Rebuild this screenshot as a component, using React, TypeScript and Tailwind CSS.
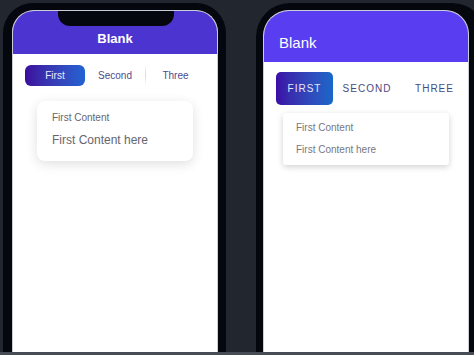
const font = { fontFamily: '"Liberation Sans", Arial, sans-serif' }

function LeftPhone() {
  return (
    <div className="w-[223px] h-[360px] shrink-0 rounded-t-[30px] bg-[#05070f] pt-[7px] pl-[9px] pr-[8px]">
      <div className="relative h-full bg-white rounded-t-[22px] overflow-hidden border border-b-0 border-[#c9cdd6]">
        <div className="absolute left-[45px] top-0 w-[116px] h-[15px] bg-[#05070f] rounded-b-[12px]" />
        <div className="h-[43px] bg-[#4b34cf] flex items-end justify-center pb-[9px]">
          <span className="text-white text-[13px] font-bold leading-none">Blank</span>
        </div>
        <div className="mt-[10px] flex justify-center">
          <div className="flex items-center">
            <div className="w-[60px] h-[21px] rounded-[6px] bg-gradient-to-r from-[#3b0c9e] to-[#1f63d2] flex items-center justify-center text-[#ece9ff] text-[10px]">
              First
            </div>
            <div className="w-[60px] h-[21px] flex items-center justify-center text-[#4d4b8e] text-[10px]">Second</div>
            <div className="w-px h-[22px] bg-gradient-to-b from-transparent via-[#d6d7e0] to-transparent" />
            <div className="w-[59px] h-[21px] flex items-center justify-center text-[#4d4b8e] text-[10px]">Three</div>
          </div>
        </div>
        <div className="mx-auto mt-[15px] w-[156px] h-[60px] rounded-[8px] bg-white shadow-[0_3px_12px_rgba(0,0,0,0.13)] pl-[15px] pt-[12px]">
          <div className="text-[10px] text-[#66666e] leading-none">First Content</div>
          <div className="mt-[11px] text-[12px] text-[#66666e] leading-none">First Content here</div>
        </div>
      </div>
    </div>
  )
}

function RightPhone() {
  return (
    <div className="w-[230px] h-[360px] shrink-0 rounded-t-[34px] bg-[#05070f] pt-[7px] pl-[7px] pr-[5px]">
      <div className="h-full w-[206px] bg-white rounded-tl-[26px] rounded-tr-[24px] overflow-hidden border border-b-0 border-[#c9cdd6]">
        <div className="h-[51px] bg-[#583df1] flex items-center pl-[15px] pt-[12px]">
          <span className="text-white text-[15px] leading-none">Blank</span>
        </div>
        <div className="mt-[10px] pl-[12px] flex items-center">
          <div className="w-[57px] h-[33px] rounded-[5px] bg-gradient-to-r from-[#3a0ca6] to-[#1867c9] flex items-center justify-center text-[#e8e6ff] text-[10px] font-medium tracking-[1px]">
            FIRST
          </div>
          <div className="w-[68px] h-[33px] flex items-center justify-center text-[#4a4a80] text-[10px] font-medium tracking-[1px]">SECOND</div>
          <div className="w-[67px] h-[33px] flex items-center justify-center text-[#4a4a80] text-[10px] font-medium tracking-[1px]">THREE</div>
        </div>
        <div className="ml-[19px] mt-[8px] w-[166px] h-[52px] rounded-[3px] bg-white shadow-[0_2px_6px_rgba(0,0,0,0.18)] pl-[13px] pt-[10px]">
          <div className="text-[10px] text-[#77777f] leading-none">First Content</div>
          <div className="mt-[12px] text-[10px] text-[#77777f] leading-none">First Content here</div>
        </div>
      </div>
    </div>
  )
}

export default function App() {
  return (
    <div className="w-[474px] h-[355px] bg-[#22262e] overflow-hidden flex flex-col" style={font}>
      <div className="h-[352px] overflow-hidden flex gap-[30px] pl-[3px] pt-[3px]">
        <LeftPhone />
        <RightPhone />
      </div>
      <div className="h-[3px] bg-[#474c55]" />
    </div>
  )
}
